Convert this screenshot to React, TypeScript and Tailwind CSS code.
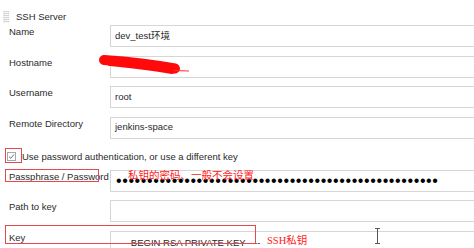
import React from "react";

const Grip = () => (
  <svg width="7" height="12" viewBox="0 0 7 12" className="block">
    {Array.from({ length: 6 }).map((_, r) =>
      Array.from({ length: 3 }).map((__, c) => (
        <rect key={`${r}-${c}`} x={c * 2 + 0.5} y={r * 2} width="1.2" height="1.2" fill="#b8b8b8" />
      ))
    )}
  </svg>
);

const Row = ({ label, children, className = "" }: { label: string; children?: React.ReactNode; className?: string }) => (
  <div className={`flex h-[22px] ${className}`}>
    <div className="w-[110px] shrink-0 pl-[9px] leading-[13px]">{label}</div>
    <div className="w-[400px] shrink-0 border border-r-0 border-[#d6d6d6] px-[4px] flex items-center bg-white">
      {children}
    </div>
  </div>
);

export default function App() {
  const dots = "•".repeat(52);
  return (
    <div
      className="relative w-[474px] h-[248px] overflow-hidden bg-white text-[#2a2a2a] text-[9.5px]"
      style={{ fontFamily: '"Liberation Sans", Arial, "Noto Sans CJK SC", sans-serif' }}
    >
      <div className="pt-[11px] flex items-center h-[23px]">
        <div className="ml-[3px]">
          <Grip />
        </div>
        <span className="ml-[6px] leading-[12px]">SSH Server</span>
      </div>

      <div className="mt-[2px] flex flex-col">
        <Row label="Name" className="mb-[8.5px]">
          <span>dev_test环境</span>
        </Row>
        <Row label="Hostname" className="mb-[8.5px]" />
        <Row label="Username" className="mb-[8.5px]">
          <span>root</span>
        </Row>
        <Row label="Remote Directory">
          <span>jenkins-space</span>
        </Row>

        <div className="mt-[11px] h-[14px] mb-[6px] flex items-center">
          <div className="ml-[7px] w-[9px] h-[9px] border border-[#a8a8a8] bg-white flex items-center justify-center">
            <svg width="7" height="7" viewBox="0 0 7 7">
              <path d="M1 3.6 L2.8 5.3 L6 1.4" stroke="#707070" strokeWidth="1" fill="none" />
            </svg>
          </div>
          <span className="ml-[6px] leading-[12px]">Use password authentication, or use a different key</span>
        </div>

        <Row label="Passphrase / Password" className="mb-[8.5px]">
          <span
            className="text-black leading-[10px] pl-[1px] tracking-[0.6px]"
            style={{ fontSize: "16px", fontFamily: '"Liberation Sans", Arial, sans-serif' }}
          >
            {dots}
          </span>
        </Row>
        <Row label="Path to key" className="mb-[8.5px]" />
        <div className="flex h-[40px]">
          <div className="w-[110px] shrink-0 pl-[9px] leading-[13px]">Key</div>
          <div className="w-[400px] shrink-0 border border-r-0 border-[#d6d6d6] px-[4px] pt-[4px] leading-[13px]">
            -----BEGIN RSA PRIVATE KEY-----
          </div>
        </div>
      </div>

      {/* annotations */}
      <svg className="absolute left-0 top-0 pointer-events-none" width="474" height="248">
        <path d="M104 60 C 125 61.5, 150 64, 175 68.5" stroke="#ff0a0a" strokeWidth="10" strokeLinecap="round" fill="none" />
        <path d="M110 63 C 130 65, 150 67, 172 71" stroke="#ff0a0a" strokeWidth="6" strokeLinecap="round" fill="none" />
        <path d="M174 70.5 L 189 71" stroke="#ff3030" strokeWidth="1" fill="none" />
        <g stroke="#555" strokeWidth="1" fill="none">
          <path d="M377.5 229 V 243" />
          <path d="M375 228.5 H 380" />
          <path d="M375 243.5 H 380" />
        </g>
      </svg>

      <div className="absolute left-[4.5px] top-[147.5px] w-[17px] h-[15px] border border-[#e5484d]" />
      <div className="absolute left-[5px] top-[169px] w-[94px] h-[13px] border border-[#e5484d]" />
      <div className="absolute left-[5px] top-[225px] w-[251px] h-[19px] border border-[#e5484d]" />

      <div
        className="absolute left-[128px] top-[168px] text-[10.5px] leading-[13px] text-[#ff2020] whitespace-nowrap"
        style={{ fontFamily: '"Noto Sans CJK SC", sans-serif' }}
      >
        私钥的密码、一般不会设置
      </div>
      <div
        className="absolute left-[267px] top-[234px] text-[10.5px] leading-[13px] text-[#ff2020] whitespace-nowrap"
        style={{ fontFamily: '"Liberation Serif", "Noto Sans CJK SC", serif' }}
      >
        SSH私钥
      </div>
    </div>
  );
}
